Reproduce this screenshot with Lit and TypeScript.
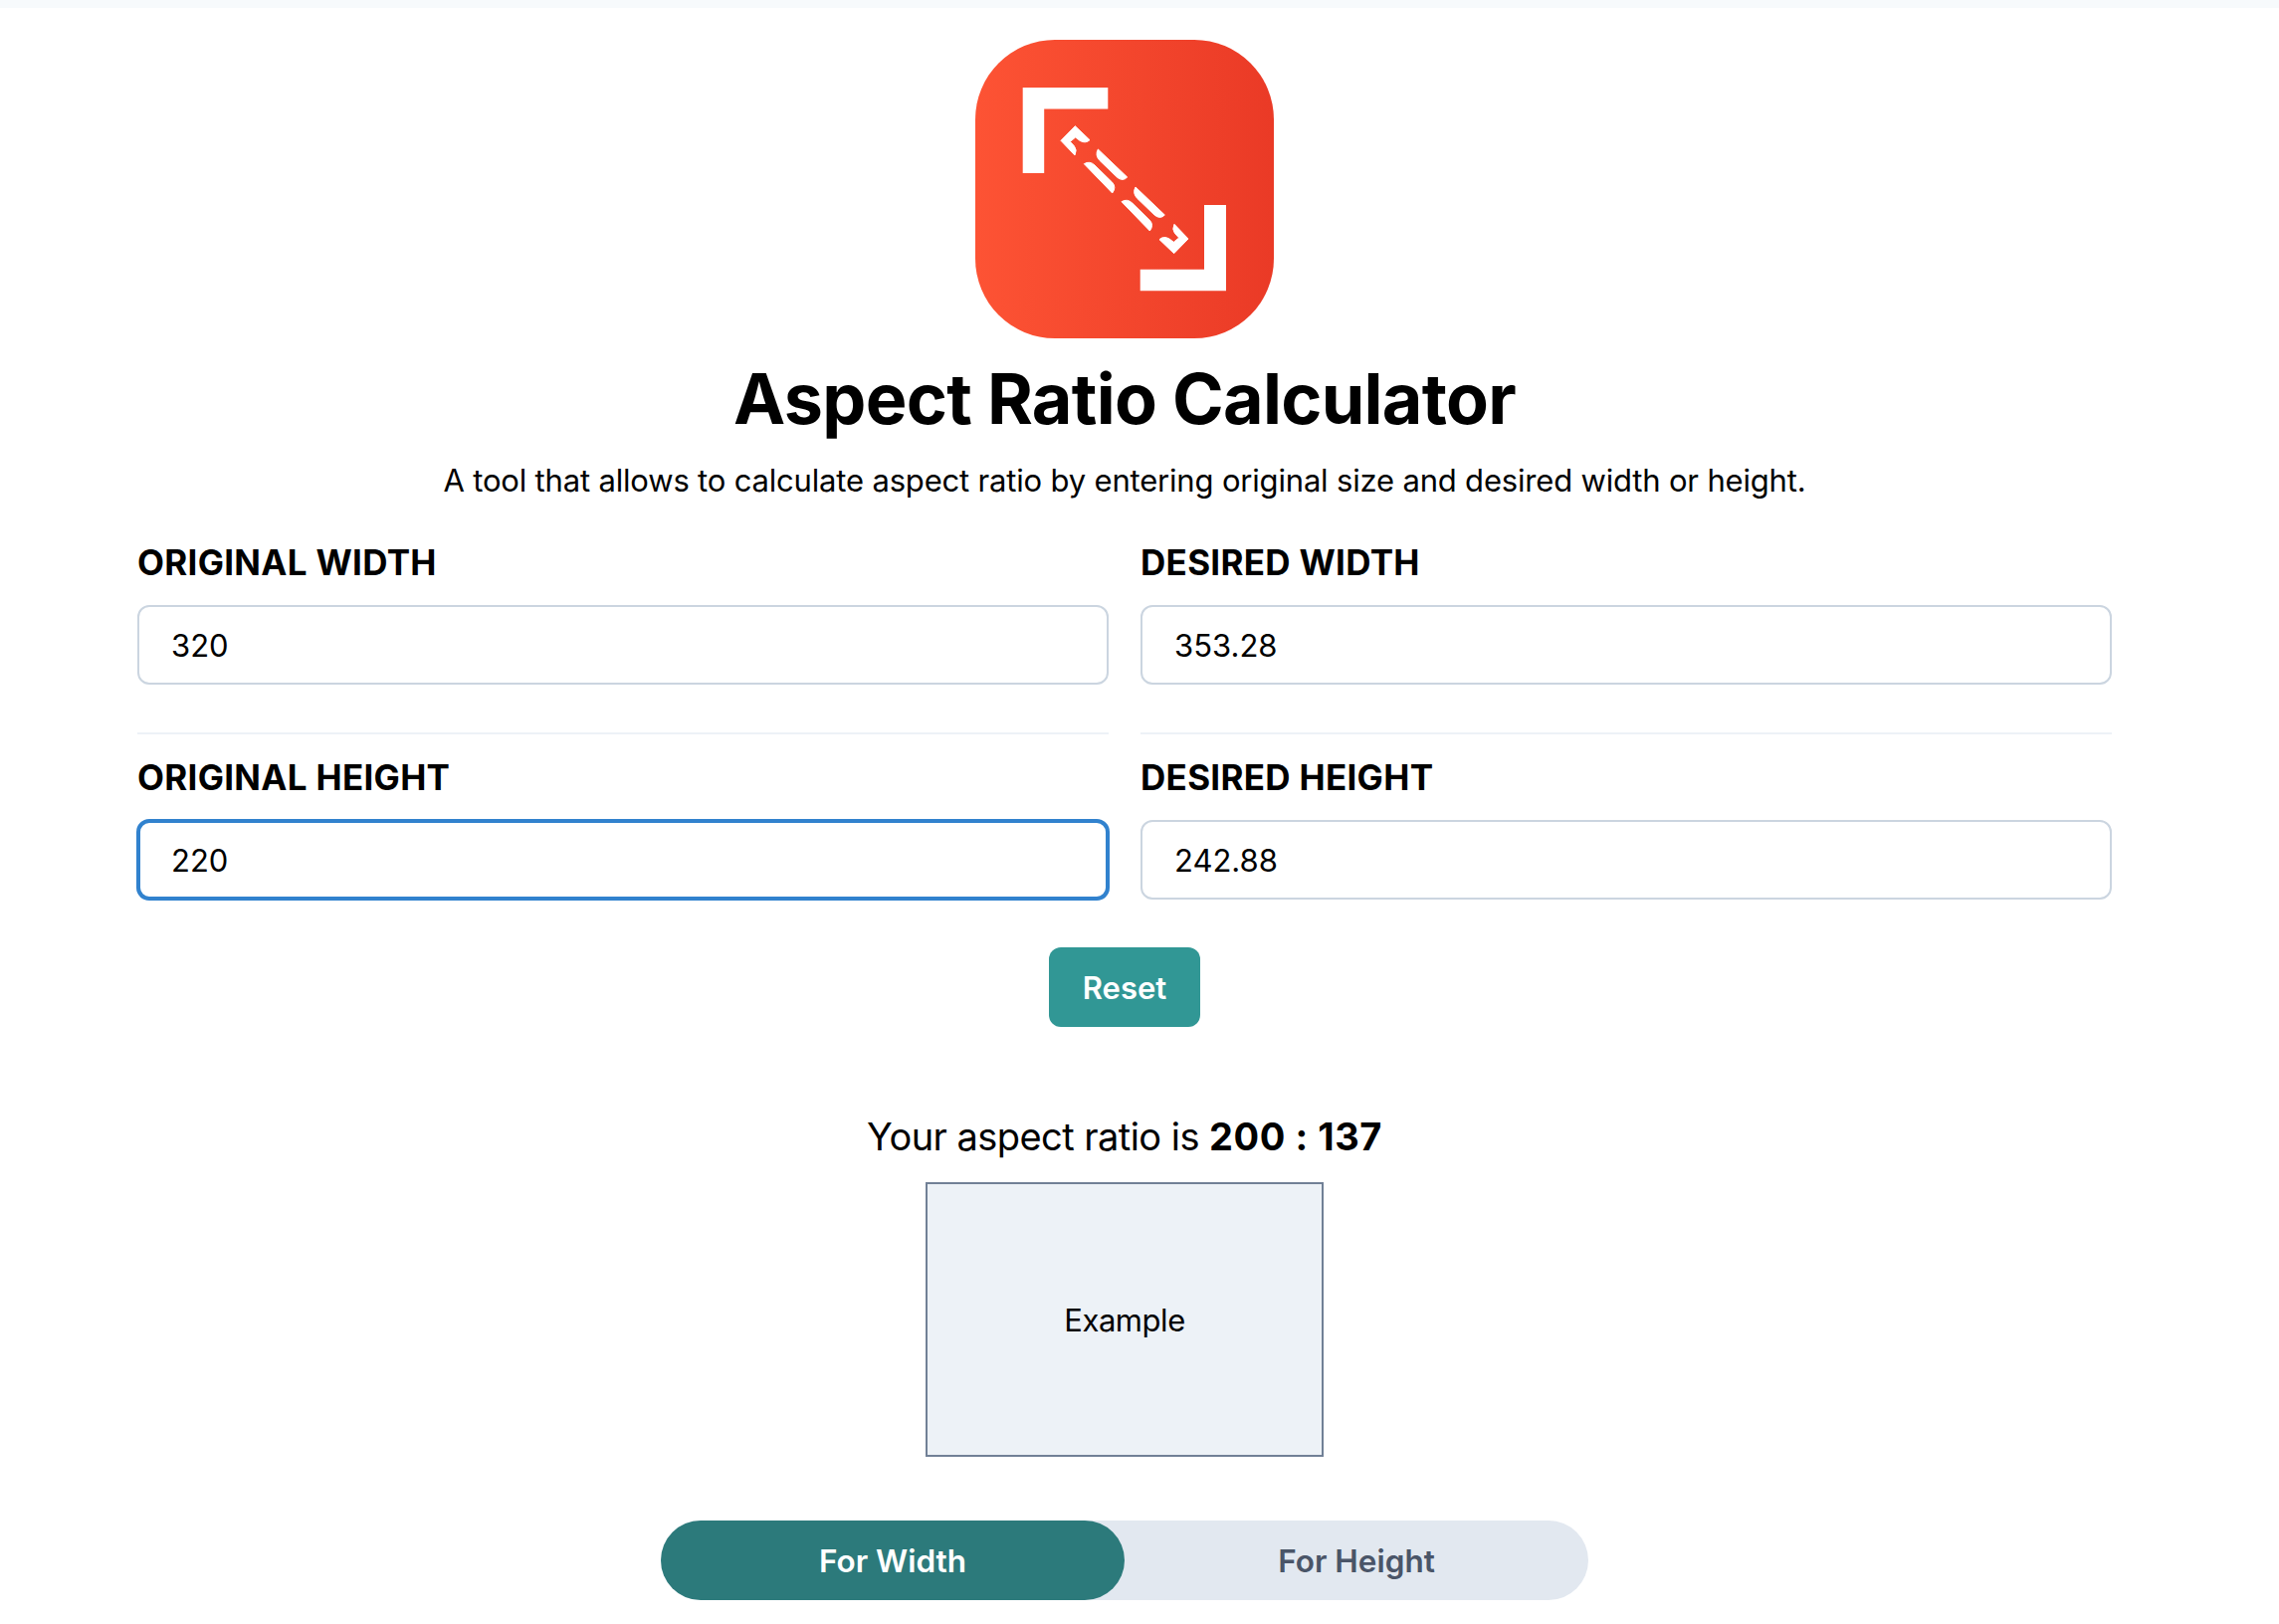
import { LitElement, html, css } from "lit";
import { customElement } from "lit/decorators.js";

@customElement("app-root")
export class AppRoot extends LitElement {
  static styles = css`
    :host { display: block; font-family: Inter, "Liberation Sans", sans-serif; color: #000; background: #fff; height: 1632px; overflow: hidden; }
    .top { height: 8px; background: #f7fafc; }
    .wrap { padding-right: 30px; }
    .page { width: 1984px; margin: 0 auto; padding-top: 32px; display: flex; flex-direction: column; align-items: center; }
    .logo { display: block; width: 300px; height: 300px; }
    h1 { margin: 21px 0 0; font-size: 70px; line-height: 80px; font-weight: 700; letter-spacing: -0.72px; white-space: nowrap; }
    .sub { margin: 18px 0 0; font-size: 31px; line-height: 48px; letter-spacing: -0.18px; white-space: nowrap; }
    .grid { align-self: stretch; margin-top: 34px; display: grid; grid-template-columns: 1fr 1fr; column-gap: 32px; }
    .col { display: flex; flex-direction: column; }
    label { display: block; font-size: 35px; line-height: 48px; font-weight: 700; letter-spacing: 0.3px; margin-bottom: 19px; white-space: nowrap; }
    input { display: block; box-sizing: border-box; width: 100%; height: 80px; padding: 0 32px; border: 2px solid #cbd5e0; border-radius: 12px; font: 31px Inter, "Liberation Sans", sans-serif; color: #000; background: #fff; outline: none; }
    input.focus { border: 3px solid #3182ce; box-shadow: 0 0 0 1px #3182ce; padding: 0 31px; }
    hr { border: 0; height: 2px; background: #edf2f7; margin: 48px 0 19px; width: 100%; }
    button { font-family: inherit; border: 0; cursor: pointer; }
    .reset { margin-top: 48px; width: 152px; height: 80px; border-radius: 12px; background: #319795; color: #fff; font-size: 31px; font-weight: 600; }
    .ratio { margin: 82px 0 0; font-size: 38px; line-height: 56px; letter-spacing: -0.55px; white-space: nowrap; }
    .ratio b { font-weight: 700; letter-spacing: 0.55px; }
    .example { box-sizing: border-box; margin-top: 18px; width: 400px; height: 276px; border: 2px solid #718096; background: #edf2f7; display: flex; align-items: center; justify-content: center; font-size: 31px; letter-spacing: -0.45px; }
    .toggle { margin-top: 64px; width: 932px; height: 80px; display: grid; grid-template-columns: 1fr 1fr; border-radius: 40px; background: #e2e8f0; }
    .toggle button { border-radius: 40px; background: transparent; color: #4a5568; font-size: 31.5px; font-weight: 600; }
    .toggle button.on { background: #2c7a7b; color: #fff; }
  `;

  renderLogo() {
    const head = "M318 424 L361 380 L405 422 Q392 434 375 424 L362 414 L346 427 L358 440 Q368 452 360 468 Z";
    const barA = "M430 450 L518 534 Q505 548 488 535 L435 484 Q420 468 430 450 Z";
    const barB = "M388 494 Q405 484 420 498 L473 550 Q486 565 473 582 Z";
    return html`<svg class="logo" viewBox="0 0 300 300" role="img" aria-label="Aspect Ratio Calculator logo">
      <defs><linearGradient id="g" x1="0" x2="1" y1="0" y2="0"><stop offset="0" stop-color="#fd5334"/><stop offset="1" stop-color="#ea3a26"/></linearGradient></defs>
      <rect width="300" height="300" rx="80" fill="url(#g)"/>
      <path fill="#fff" d="M47.7 48 H133.3 V69.5 H69.2 V134 H47.7 Z M252 252.3 H165.7 V230.7 H230 V166 H252 Z"/>
      <g transform="translate(-20 -40) scale(.33333)" fill="#fff" stroke="#fff" stroke-width="3" stroke-linejoin="round">
        <path d=${head}/><path d=${barA}/><path d=${barB}/>
        <g transform="translate(113 114)"><path d=${barA}/><path d=${barB}/></g>
        <path d=${head} transform="rotate(180 510 572)"/>
      </g>
    </svg>`;
  }

  render() {
    return html`
      <div class="top"></div>
      <div class="wrap">
        <div class="page">
          ${this.renderLogo()}
          <h1>Aspect Ratio Calculator</h1>
          <p class="sub">A tool that allows to calculate aspect ratio by entering original size and desired width or height.</p>
          <div class="grid">
            <div class="col">
              <label>ORIGINAL WIDTH</label>
              <input .value=${"320"} />
              <hr />
              <label>ORIGINAL HEIGHT</label>
              <input class="focus" .value=${"220"} />
            </div>
            <div class="col">
              <label>DESIRED WIDTH</label>
              <input .value=${"353.28"} />
              <hr />
              <label>DESIRED HEIGHT</label>
              <input .value=${"242.88"} />
            </div>
          </div>
          <button class="reset">Reset</button>
          <p class="ratio">Your aspect ratio is <b>200 : 137</b></p>
          <div class="example">Example</div>
          <div class="toggle">
            <button class="on">For Width</button>
            <button>For Height</button>
          </div>
        </div>
      </div>
    `;
  }
}
